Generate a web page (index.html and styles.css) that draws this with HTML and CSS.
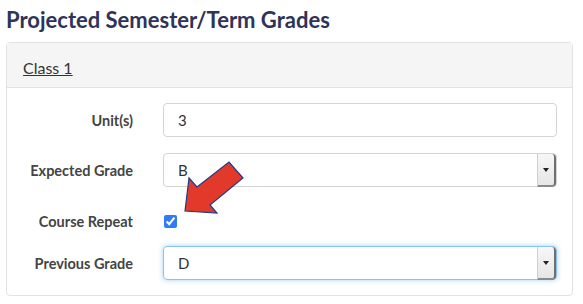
FILE: index.html
```html
<!DOCTYPE html>
<html lang="en">

<head>
    <meta charset="UTF-8">
    <meta name="viewport" content="width=device-width, initial-scale=1.0">
    <title>Projected Semester/Term Grades</title>
    <link rel="stylesheet" href="styles.css">
</head>

<body>
    <div class="page">
        <h2 class="title">Projected Semester/Term Grades</h2>
        <div class="panel">
            <div class="panel-head">
                <a class="panel-link">Class 1</a>
            </div>
            <div class="panel-body">
                <div class="row">
                    <label class="lbl">Unit(s)</label>
                    <div class="field">3</div>
                </div>
                <div class="row">
                    <label class="lbl">Expected Grade</label>
                    <div class="field select">
                        <span>B</span>
                        <span class="caret"></span>
                    </div>
                </div>
                <div class="row check-row">
                    <label class="lbl">Course Repeat</label>
                    <div><input type="checkbox" class="check" checked></div>
                </div>
                <div class="row">
                    <label class="lbl">Previous Grade</label>
                    <div class="field select focus">
                        <span>D</span>
                        <span class="caret"></span>
                    </div>
                </div>

                <!-- annotation arrow over the form -->
                <svg class="arrow" width="70" height="60" viewBox="0 0 70 60">
                    <polygon points="4,53 8,20 16,29 48,4 62,20 29,47 36,55"
                        fill="#e3392a" stroke="#1d3c88" stroke-width="1.2" stroke-linejoin="miter" />
                </svg>
            </div>
        </div>
    </div>
</body>

</html>
```

FILE: styles.css
```css
* {
    margin: 0;
    padding: 0;
    box-sizing: border-box;
}

body {
    font-family: Lato, "Liberation Sans", sans-serif;
    background: #fff;
    color: #333;
}

.page {
    padding: 0 10px 0 6px;
}

.title {
    font-size: 22px;
    font-weight: 700;
    color: #2f3358;
    line-height: 26px;
    padding-top: 7px;
    height: 42px;
}

.panel {
    border: 1px solid #e2e2e2;
    border-radius: 4px;
}

.panel-head {
    background: #f5f5f5;
    border-bottom: 1px solid #e2e2e2;
    height: 45px;
    display: flex;
    align-items: center;
    padding: 0 16px;
}

.panel-link {
    font-size: 16px;
    color: #333;
    text-decoration: underline;
    margin-top: 4px;
}

.panel-body {
    position: relative;
    padding: 15px 15px 15px 0;
    display: flex;
    flex-direction: column;
    gap: 16px;
}

.row {
    display: grid;
    grid-template-columns: 126px 1fr;
    column-gap: 30px;
    align-items: center;
}

.lbl {
    text-align: right;
    font-size: 14.5px;
    font-weight: 700;
    color: #444;
}

.field {
    height: 34px;
    border: 1px solid #d4d4d4;
    border-radius: 4px;
    padding: 0 14px;
    display: flex;
    align-items: center;
    font-size: 15px;
    color: #333;
}

.select {
    justify-content: space-between;
    padding-right: 0;
}

.caret {
    width: 19px;
    height: 33px;
    margin-top: 1px;
    background: linear-gradient(#f7f7f7, #e6e6e6);
    border-left: 1px solid #cfcfcf;
    border-right: 2px solid #6f6f6f;
    border-bottom: 2px solid #8a8a8a;
    border-radius: 0 4px 4px 0;
    display: flex;
    align-items: center;
    justify-content: center;
}

.caret::after {
    content: "";
    border-left: 3px solid transparent;
    border-right: 3px solid transparent;
    border-top: 4px solid #222;
}

.focus {
    border-color: #8dc1ee;
    box-shadow: 0 0 5px rgba(102, 175, 233, 0.6);
}

.check-row {
    padding-top: 9px;
    height: 27px;
}

.check {
    width: 13px;
    height: 13px;
    margin-left: 1px;
    accent-color: #2f7cf6;
    display: block;
}

.arrow {
    position: absolute;
    left: 174px;
    top: 70px;
}
```
